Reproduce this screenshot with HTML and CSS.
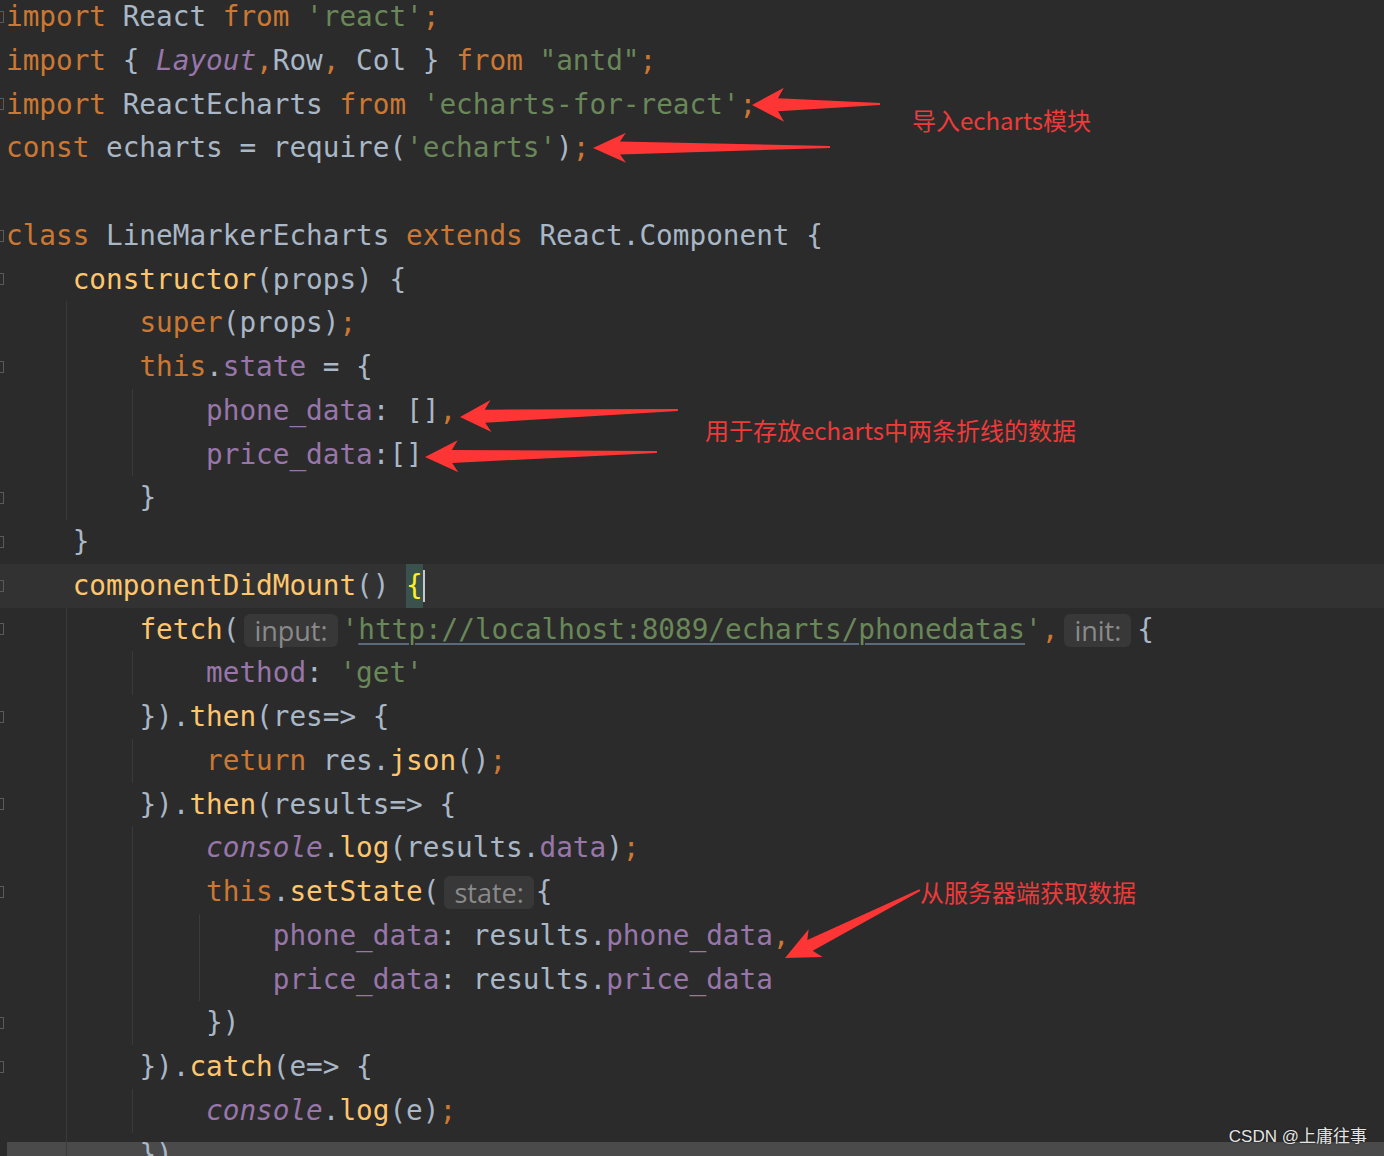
FILE: index.html
```html
<!DOCTYPE html>
<html lang="zh-CN">
<head>
<meta charset="utf-8">
<title>LineMarkerEcharts.js</title>
<link rel="stylesheet" href="styles.css">
</head>
<body>
<div class="editor">
  <div class="code">
    <div class="line fold"><span class="k">import</span> React <span class="k">from</span> <span class="s">'react'</span><span class="k">;</span></div>
    <div class="line"><span class="k">import</span> { <span class="i">Layout</span><span class="k">,</span>Row<span class="k">,</span> Col } <span class="k">from</span> <span class="s">"antd"</span><span class="k">;</span></div>
    <div class="line fold"><span class="k">import</span> ReactEcharts <span class="k">from</span> <span class="s">'echarts-for-react'</span><span class="k">;</span></div>
    <div class="line"><span class="k">const</span> echarts = require(<span class="s">'echarts'</span>)<span class="k">;</span></div>
    <div class="line"></div>
    <div class="line fold"><span class="k">class</span> LineMarkerEcharts <span class="k">extends</span> React.Component {</div>
    <div class="line fold"><span class="ind">    </span><span class="f">constructor</span>(props) {</div>
    <div class="line"><span class="ind g">    </span><span class="ind">    </span><span class="k">super</span>(props)<span class="k">;</span></div>
    <div class="line fold"><span class="ind g">    </span><span class="ind">    </span><span class="k">this</span>.<span class="p">state</span> = {</div>
    <div class="line"><span class="ind g">    </span><span class="ind g">    </span><span class="ind">    </span><span class="p">phone_data</span>: []<span class="k">,</span></div>
    <div class="line"><span class="ind g">    </span><span class="ind g">    </span><span class="ind">    </span><span class="p">price_data</span>:[]</div>
    <div class="line fold"><span class="ind g">    </span><span class="ind">    </span>}</div>
    <div class="line fold"><span class="ind">    </span>}</div>
    <div class="line fold current"><span class="ind">    </span><span class="f">componentDidMount</span>() <span class="brace">{</span><span class="caret"></span></div>
    <div class="line fold"><span class="ind g">    </span><span class="ind">    </span><span class="f">fetch</span>(<span class="hint hint-input">input:</span><span class="s">'<span class="url">http://localhost:8089/echarts/phonedatas</span>'</span><span class="k">,</span><span class="hint hint-init">init:</span>{</div>
    <div class="line"><span class="ind g">    </span><span class="ind g">    </span><span class="ind">    </span><span class="p">method</span>: <span class="s">'get'</span></div>
    <div class="line fold"><span class="ind g">    </span><span class="ind">    </span>}).<span class="f">then</span>(res=&gt; {</div>
    <div class="line"><span class="ind g">    </span><span class="ind g">    </span><span class="ind">    </span><span class="k">return</span> res.<span class="f">json</span>()<span class="k">;</span></div>
    <div class="line fold"><span class="ind g">    </span><span class="ind">    </span>}).<span class="f">then</span>(results=&gt; {</div>
    <div class="line"><span class="ind g">    </span><span class="ind g">    </span><span class="ind">    </span><span class="i">console</span>.<span class="f">log</span>(results.<span class="p">data</span>)<span class="k">;</span></div>
    <div class="line fold"><span class="ind g">    </span><span class="ind g">    </span><span class="ind">    </span><span class="k">this</span>.<span class="f">setState</span>(<span class="hint hint-state">state:</span>{</div>
    <div class="line"><span class="ind g">    </span><span class="ind g">    </span><span class="ind g">    </span><span class="ind">    </span><span class="p">phone_data</span>: results.<span class="p">phone_data</span><span class="k">,</span></div>
    <div class="line"><span class="ind g">    </span><span class="ind g">    </span><span class="ind g">    </span><span class="ind">    </span><span class="p">price_data</span>: results.<span class="p">price_data</span></div>
    <div class="line fold"><span class="ind g">    </span><span class="ind g">    </span><span class="ind">    </span>})</div>
    <div class="line fold"><span class="ind g">    </span><span class="ind">    </span>}).<span class="f">catch</span>(e=&gt; {</div>
    <div class="line"><span class="ind g">    </span><span class="ind g">    </span><span class="ind">    </span><span class="i">console</span>.<span class="f">log</span>(e)<span class="k">;</span></div>
    <div class="line last"><span class="ind g">    </span><span class="ind">    </span>})</div>
  </div>

  <svg class="arrows" width="1384" height="1156" viewBox="0 0 1384 1156" aria-hidden="true">
    <g fill="#fd3535">
      <path transform="translate(752 105) rotate(-0.45)" d="M0,0 L32,-17 L26,-6.5 L128,-1 L128,1 L26,6.5 L32,17 Z"/>
      <path transform="translate(593 148) rotate(-0.24)" d="M0,0 L33,-15 L27,-6.5 L237,-1 L237,1 L27,6.5 L33,15 Z"/>
      <path transform="translate(460 417) rotate(-1.84)" d="M0,0 L31,-16 L25,-6.5 L218,-1 L218,1 L25,6.5 L31,16 Z"/>
      <path transform="translate(425 457) rotate(-1.23)" d="M0,0 L33,-16 L27,-6.5 L232,-1 L232,1 L27,6.5 L33,16 Z"/>
      <path transform="translate(785 958) rotate(-26.7)" d="M0,0 L34,-15 L28,-6 L151,-1 L151,1 L28,6 L34,16 Z"/>
    </g>
  </svg>

  <div class="note note-1">导入echarts模块</div>
  <div class="note note-2">用于存放echarts中两条折线的数据</div>
  <div class="note note-3">从服务器端获取数据</div>

  <div class="watermark">CSDN @上庸往事</div>
</div>
</body>
</html>
```

FILE: styles.css
```css
html, body {
  margin: 0;
  padding: 0;
  background: #2b2b2b;
  overflow: hidden;
}

.editor {
  position: relative;
  width: 1384px;
  height: 1156px;
  overflow: hidden;
  background: #2b2b2b;
  color: #a9b7c6;
  font-family: "DejaVu Sans Mono", "Liberation Mono", monospace;
  font-size: 27.7px;
}

.code {
  margin-top: -5px;
}

.line {
  position: relative;
  height: 43.76px;
  line-height: 43.76px;
  padding-left: 6px;
  white-space: pre;
}

.line.current {
  background: #323232;
}

.line.fold::before {
  content: "";
  position: absolute;
  left: -4px;
  top: 50%;
  margin-top: -6px;
  width: 6px;
  height: 10px;
  border: 1px solid #5a5a5a;
}

.line.last {
  background: linear-gradient(#4a4a4a, #4a4a4a) 7px 9px / calc(100% - 7px) 100% no-repeat;
}

.ind {
  position: relative;
  display: inline-block;
  height: 100%;
  vertical-align: top;
}

.ind.g::after {
  content: "";
  position: absolute;
  top: 0;
  bottom: 0;
  right: 6px;
  width: 1px;
  background: #3a3a3a;
}

/* syntax colours (Darcula) */
.k { color: #cc7832; }
.s { color: #6a8759; }
.f { color: #ffc66d; }
.p { color: #9876aa; }
.i { color: #9876aa; font-style: italic; }

.url {
  text-decoration: underline;
  text-decoration-color: #5b6a7d;
  text-decoration-thickness: 2px;
  text-underline-offset: 4px;
}

.brace {
  display: inline-block;
  height: 100%;
  vertical-align: top;
  background: #3b514d;
  color: #ffef28;
}

.caret {
  display: inline-block;
  vertical-align: top;
  width: 2px;
  height: 32px;
  margin-top: 6px;
  background: #c8c8c8;
}

.hint {
  display: inline-block;
  vertical-align: top;
  margin-top: 6px;
  height: 33px;
  line-height: 33px;
  padding: 0 10px;
  border-radius: 6px;
  background: #383838;
  color: #8a8a8a;
  font-family: "Open Sans", "Noto Sans", sans-serif;
  font-size: 27px;
}

.hint-input { margin-left: 5px; margin-right: 4px; }
.hint-init { margin-left: 6px; margin-right: 6px; }
.hint-state { margin-left: 5px; margin-right: 2px; }

.arrows {
  position: absolute;
  left: 0;
  top: 0;
  pointer-events: none;
}

.note {
  position: absolute;
  color: #ee3a3a;
  font-family: "Noto Sans CJK SC", "Noto Sans", sans-serif;
  font-size: 24px;
  line-height: 24px;
  white-space: nowrap;
}

.note-1 { left: 912px; top: 108px; }
.note-2 { left: 705px; top: 418px; }
.note-3 { left: 920px; top: 880px; }

.watermark {
  position: absolute;
  right: 17px;
  top: 1127px;
  font-family: "Liberation Sans", "Noto Sans CJK SC", sans-serif;
  font-size: 17px;
  line-height: 20px;
  color: #e4e4e4;
  text-shadow: 0 0 2px rgba(0, 0, 0, 0.6);
  white-space: nowrap;
}
```
